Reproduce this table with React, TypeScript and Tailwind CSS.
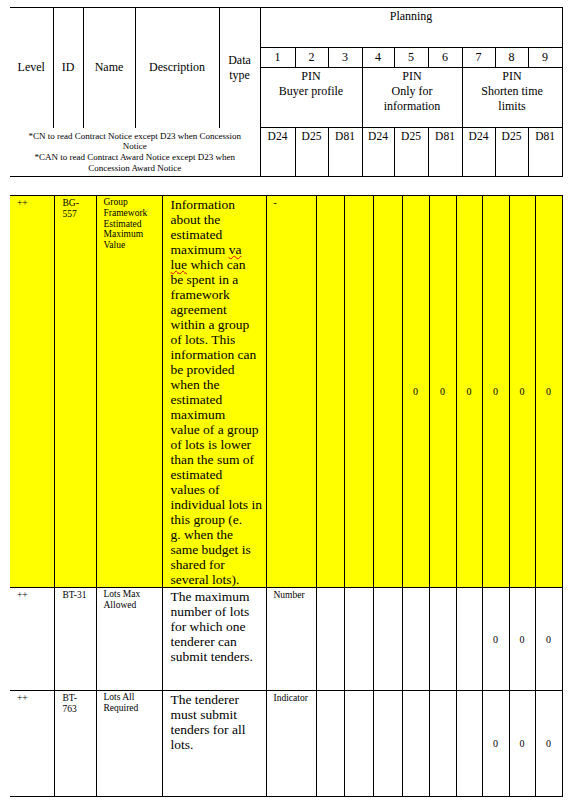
import React from "react";

interface Row {
  level: string;
  id: string[];
  name: string[];
  desc: React.ReactNode[];
  type: string;
  zeros: boolean[];
  yellow: boolean;
  height: string;
}

const wavy = "underline decoration-wavy decoration-red-600 decoration-1 underline-offset-1";

const rows: Row[] = [
  {
    level: "++",
    id: ["BG-", "557"],
    name: ["Group", "Framework", "Estimated", "Maximum", "Value"],
    desc: [
      "Information",
      "about the",
      "estimated",
      <>maximum <span className={wavy}>va</span></>,
      <><span className={wavy}>lue</span> which can</>,
      "be spent in a",
      "framework",
      "agreement",
      "within a group",
      "of lots. This",
      "information can",
      "be provided",
      "when the",
      "estimated",
      "maximum",
      "value of a group",
      "of lots is lower",
      "than the sum of",
      "estimated",
      "values of",
      "individual lots in",
      "this group (e.",
      "g. when the",
      "same budget is",
      "shared for",
      "several lots).",
    ],
    type: "-",
    zeros: [false, false, false, true, true, true, true, true, true],
    yellow: true,
    height: "h-[391px]",
  },
  {
    level: "++",
    id: ["BT-31"],
    name: ["Lots Max", "Allowed"],
    desc: ["The maximum", "number of lots", "for which one", "tenderer can", "submit tenders."],
    type: "Number",
    zeros: [false, false, false, false, false, false, true, true, true],
    yellow: false,
    height: "h-[103px]",
  },
  {
    level: "++",
    id: ["BT-", "763"],
    name: ["Lots All", "Required"],
    desc: ["The tenderer", "must submit", "tenders for all", "lots."],
    type: "Indicator",
    zeros: [false, false, false, false, false, false, true, true, true],
    yellow: false,
    height: "h-[106px]",
  },
];

const planNums = ["1", "2", "3", "4", "5", "6", "7", "8", "9"];
const dCodes = ["D24", "D25", "D81", "D24", "D25", "D81", "D24", "D25", "D81"];

function HeaderTable() {
  return (
    <table className="table-fixed border-collapse w-[552px] border-t border-b border-r border-black text-[12px] leading-[15px] text-black">
      <colgroup>
        <col className="w-[43px]" />
        <col className="w-[30px]" />
        <col className="w-[52px]" />
        <col className="w-[84px]" />
        <col className="w-[41px]" />
        <col className="w-[35px]" />
        <col className="w-[33px]" />
        <col className="w-[34px]" />
        <col className="w-[32px]" />
        <col className="w-[34px]" />
        <col className="w-[34px]" />
        <col className="w-[33px]" />
        <col className="w-[33px]" />
        <col className="w-[34px]" />
      </colgroup>
      <tbody>
        <tr className="h-[40px]">
          <td rowSpan={3} className="border-r border-black text-center align-middle">Level</td>
          <td rowSpan={3} className="border-r border-black text-center align-middle">ID</td>
          <td rowSpan={3} className="border-r border-black text-center align-middle">Name</td>
          <td rowSpan={3} className="border-r border-black text-center align-middle">Description</td>
          <td rowSpan={3} className="border-r border-black text-center align-middle">
            Data
            <br />
            type
          </td>
          <td colSpan={9} className="border-b border-black text-center align-top pt-[1px]">Planning</td>
        </tr>
        <tr className="h-[20px]">
          {planNums.map((n) => (
            <td key={n} className="border-r border-b border-black text-center align-middle">
              {n}
            </td>
          ))}
        </tr>
        <tr className="h-[60px]">
          <td colSpan={3} className="border-r border-b border-black text-center align-top pt-[1px]">
            PIN
            <br />
            Buyer profile
          </td>
          <td colSpan={3} className="border-r border-b border-black text-center align-top pt-[1px]">
            PIN
            <br />
            Only for
            <br />
            information
          </td>
          <td colSpan={3} className="border-r border-b border-black text-center align-top pt-[1px]">
            PIN
            <br />
            Shorten time
            <br />
            limits
          </td>
        </tr>
        <tr className="h-[49px]">
          <td colSpan={5} className="border-r border-black text-center align-top pt-[3px] text-[9px] leading-[10.7px]">
            *CN to read Contract Notice except D23 when Concession
            <br />
            Notice
            <br />
            *CAN to read Contract Award Notice except D23 when
            <br />
            Concession Award Notice
          </td>
          {dCodes.map((d, i) => (
            <td key={i} className="border-r border-black text-center align-top pt-[1px] text-[11.5px]">
              {d}
            </td>
          ))}
        </tr>
      </tbody>
    </table>
  );
}

function DataTable() {
  return (
    <table className="table-fixed border-collapse w-[552px] border-t border-b border-r border-black text-black">
      <colgroup>
        <col className="w-[44px]" />
        <col className="w-[42px]" />
        <col className="w-[66px]" />
        <col className="w-[104px]" />
        <col className="w-[50px]" />
        <col className="w-[28px]" />
        <col className="w-[29px]" />
        <col className="w-[29px]" />
        <col className="w-[27px]" />
        <col className="w-[27px]" />
        <col className="w-[26px]" />
        <col className="w-[27px]" />
        <col className="w-[26px]" />
        <col className="w-[27px]" />
      </colgroup>
      <tbody>
        {rows.map((r, ri) => (
          <tr key={ri} className={`${r.height} border-b border-black ${r.yellow ? "bg-[#ffff00]" : "bg-white"}`}>
            <td className="border-r border-black align-top pl-[7px] pt-[2px] text-[9.5px] leading-[11px]">{r.level}</td>
            <td className="border-r border-black align-top pl-[8px] pt-[2px] text-[9.5px] leading-[11px]">
              {r.id.map((l, i) => (
                <div key={i}>{l}</div>
              ))}
            </td>
            <td className="border-r border-black align-top pl-[7px] pt-[1px] text-[9.5px] leading-[10.8px]">
              {r.name.map((l, i) => (
                <div key={i}>{l}</div>
              ))}
            </td>
            <td className="border-r border-black align-top pl-[8px] pt-[1px] text-[13.5px] leading-[15px]">
              {r.desc.map((l, i) => (
                <div key={i} className="whitespace-nowrap">
                  {l}
                </div>
              ))}
            </td>
            <td className="border-r border-black align-top pl-[7px] pt-[2px] text-[9.5px] leading-[11px]">{r.type}</td>
            {r.zeros.map((z, i) => (
              <td key={i} className="border-r border-black align-middle text-center text-[10px]">
                {z ? "0" : ""}
              </td>
            ))}
          </tr>
        ))}
      </tbody>
    </table>
  );
}

export default function App() {
  return (
    <div className="w-[568px] min-h-[804px] bg-white pt-[7px] pl-[10px] font-['Liberation_Serif',serif]">
      <HeaderTable />
      <div className="h-[18px]" />
      <DataTable />
    </div>
  );
}
